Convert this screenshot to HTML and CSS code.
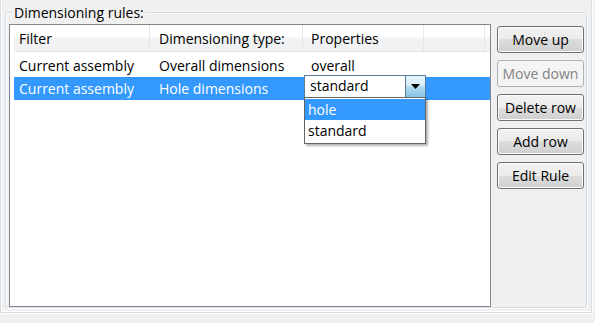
FILE: index.html
```html
<!DOCTYPE html>
<html>
<head>
<meta charset="utf-8">
<link rel="stylesheet" href="styles.css">
</head>
<body>
<div class="panel">
  <div class="group">
    <span class="legend">Dimensioning rules:</span>
    <div class="list">
      <div class="table">
        <div class="row head">
          <div class="c c1">Filter</div>
          <div class="c c2">Dimensioning type:</div>
          <div class="c c3">Properties</div>
          <div class="c c4"></div>
        </div>
        <div class="row r1">
          <div class="c c1">Current assembly</div>
          <div class="c c2">Overall dimensions</div>
          <div class="c c3">overall</div>
        </div>
        <div class="row r2 sel">
          <div class="c c1">Current assembly</div>
          <div class="c c2">Hole dimensions</div>
          <div class="c c3"></div>
          <div class="combo">
            <span class="combo-text">standard</span>
            <span class="combo-btn"><svg width="9" height="5" viewBox="0 0 9 5"><path d="M0 0H9L4.5 5Z" fill="#000"/></svg></span>
          </div>
          <div class="drop">
            <div class="opt hl">hole</div>
            <div class="opt">standard</div>
          </div>
        </div>
      </div>
    </div>
    <div class="buttons">
      <div class="btn">Move up</div>
      <div class="btn dis">Move down</div>
      <div class="btn">Delete row</div>
      <div class="btn">Add row</div>
      <div class="btn">Edit Rule</div>
    </div>
  </div>
</div>
</body>
</html>
```
FILE: styles.css
```css
html, body {
  margin: 0;
  padding: 0;
  background: #f0f0f0;
  width: 595px;
  height: 323px;
  overflow: hidden;
  font-family: "Open Sans", "Noto Sans", sans-serif;
  font-size: 14px;
  color: #000;
}
.panel {
  box-sizing: border-box;
  width: 592px;
  height: 313px;
  border: 1px solid #d5dfe5;
  border-top: none;
  box-shadow: 1px 1px 0 #fff, inset 1px -1px 0 #fff;
  padding: 12px 0 0 4px;
}
.group {
  position: relative;
  box-sizing: border-box;
  width: 582px;
  height: 296px;
  border: 1px solid #d5dfe5;
  border-radius: 3px;
  box-shadow: inset 1px 1px 0 #fff, 1px 1px 0 #fff;
  padding: 11px 2px 0 3px;
  display: flex;
  gap: 6px;
}
.legend {
  position: absolute;
  left: 7px;
  top: -10px;
  padding: 0 1px;
  background: #f0f0f0;
  line-height: 20px;
}
.list {
  box-sizing: border-box;
  width: 482px;
  height: 283px;
  border: 1px solid #828790;
  background: #fff;
  padding-left: 4px;
}
.table {
  display: flex;
  flex-direction: column;
}
.row {
  position: relative;
  display: flex;
  height: 23px;
  line-height: 23px;
  white-space: nowrap;
}
.head {
  height: 26px;
  line-height: 28px;
  background: linear-gradient(#ffffff 0%, #ffffff 45%, #f1f2f4 50%, #f1f2f4 100%);
  border-bottom: 1px solid #e3e5e8;
}
.head .c {
  border-right: 1px solid #e3e5e8;
}
.head .c4 {
  width: 61px;
  flex: none;
}
.r1 {
  margin-top: 2px;
}
.c {
  box-sizing: border-box;
  flex: none;
  overflow: visible;
}
.c1 { width: 136px; padding-left: 5px; }
.c2 { width: 153px; padding-left: 9px; }
.c3 { width: 121px; padding-left: 8px; }
.sel {
  background: #3399ff;
  color: #fff;
}
.combo {
  position: absolute;
  left: 290px;
  top: -2px;
  box-sizing: border-box;
  width: 122px;
  height: 23px;
  border: 1px solid #5b7c99;
  background: #fff;
  color: #000;
  display: flex;
}
.combo-text {
  flex: 1;
  padding-left: 5px;
  line-height: 20px;
}
.combo-btn {
  box-sizing: border-box;
  width: 20px;
  height: 21px;
  border-left: 1px solid #5b7c99;
  background: linear-gradient(#e7f4fb 0%, #d6ecf8 45%, #b3dcf2 50%, #8ac3e4 100%);
  display: flex;
  align-items: center;
  justify-content: center;
}
.drop {
  position: absolute;
  left: 290px;
  top: 20px;
  box-sizing: border-box;
  width: 122px;
  height: 47px;
  border: 1px solid #646464;
  background: #fff;
  color: #000;
  padding: 1px 0;
  box-shadow: 2px 2px 2px rgba(0,0,0,0.3);
}
.opt {
  height: 21px;
  line-height: 21px;
  padding-left: 3px;
}
.opt.hl {
  background: #3399ff;
  color: #fff;
}
.buttons {
  display: flex;
  flex-direction: column;
  gap: 7px;
  padding-top: 2px;
}
.btn {
  box-sizing: border-box;
  width: 87px;
  height: 27px;
  border: 1px solid #707070;
  border-radius: 3px;
  background: linear-gradient(#f2f2f2 0%, #ebebeb 50%, #dddddd 50%, #cfcfcf 100%);
  box-shadow: inset 0 0 0 1px #fcfcfc;
  text-align: center;
  line-height: 25px;
  white-space: nowrap;
}
.btn.dis {
  border-color: #adb2b5;
  background: #f4f4f4;
  color: #838383;
  box-shadow: none;
}
```
